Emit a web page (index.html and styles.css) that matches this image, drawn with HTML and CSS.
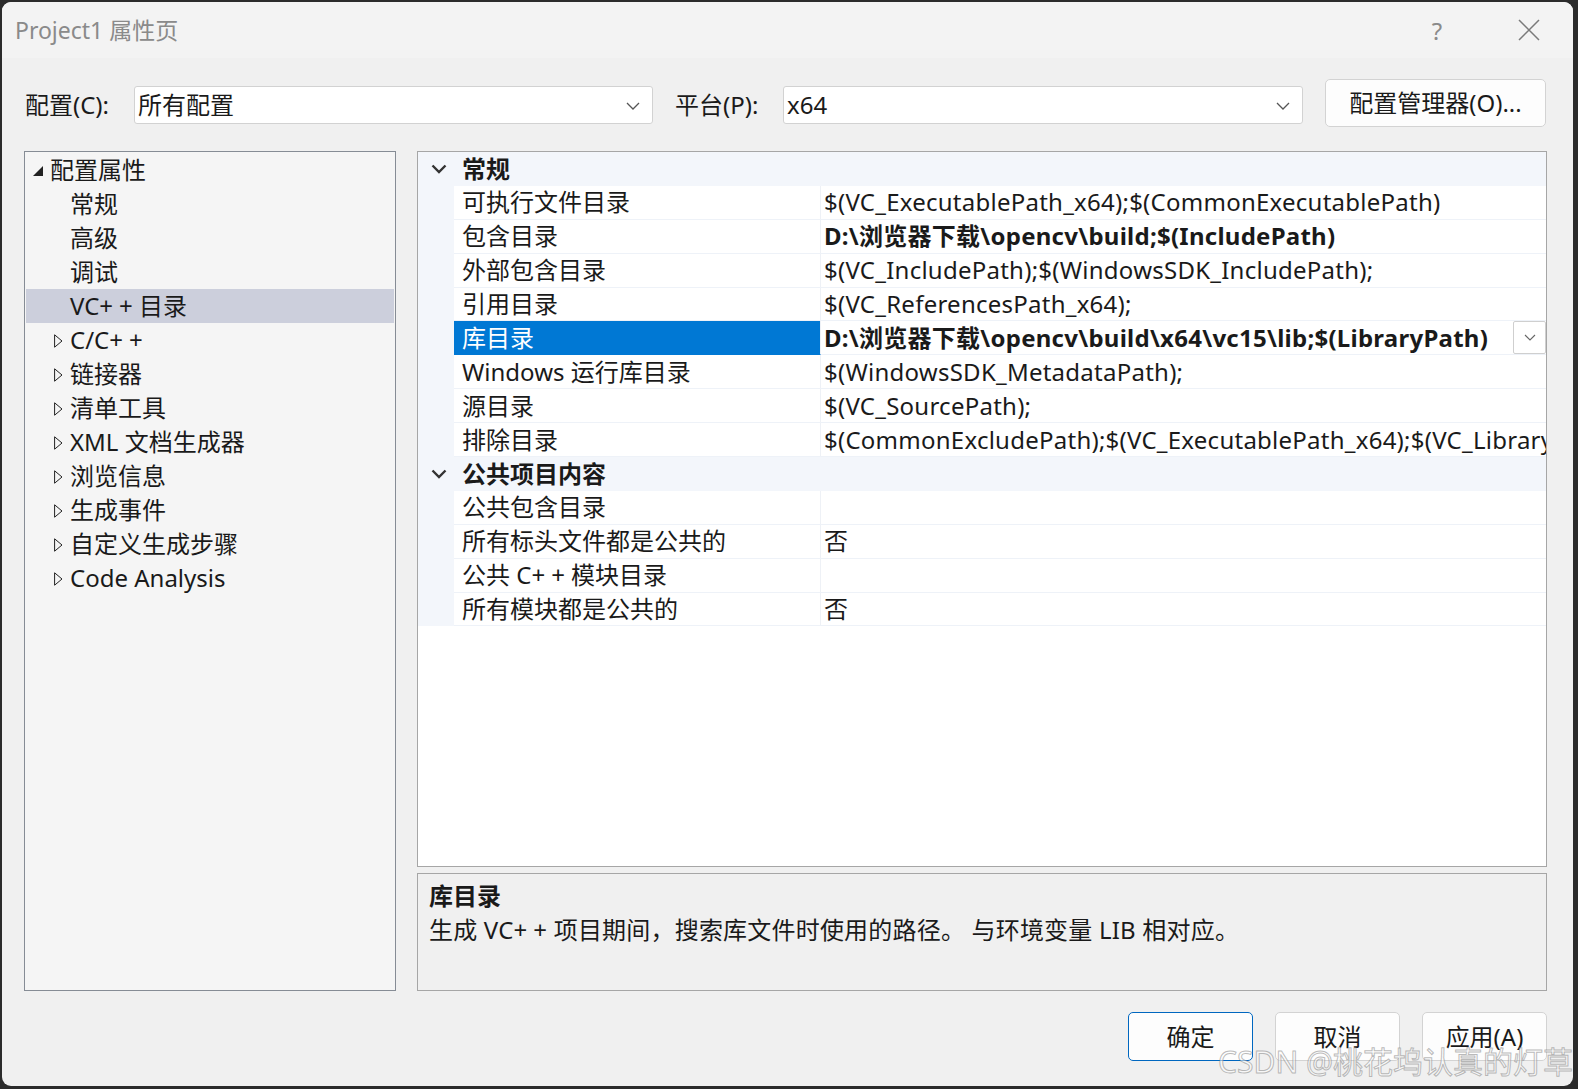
FILE: index.html
```html
<!DOCTYPE html>
<html lang="zh-CN">
<head>
<meta charset="utf-8">
<title>Project1 属性页</title>
<link rel="stylesheet" href="styles.css">
</head>
<body>
<div class="window">
  <div class="titlebar">
    <div class="title">Project1 属性页</div>
    <div class="title-actions">
      <span class="help">?</span>
      <span class="close"><svg width="22" height="22" viewBox="0 0 22 22"><path d="M1 1 L21 21 M21 1 L1 21" stroke="#7a7a7a" stroke-width="1.5" fill="none"/></svg></span>
    </div>
  </div>
  <div class="content">
    <div class="config-row">
      <span class="cfg-label">配置(C):</span>
      <div class="combo"><span>所有配置</span><svg class="combo-chev" width="14" height="8" viewBox="0 0 14 8"><path d="M1 1 L7 7 L13 1" stroke="#555" stroke-width="1.3" fill="none"/></svg></div>
      <span class="cfg-label cfg-label2">平台(P):</span>
      <div class="combo combo2"><span>x64</span><svg class="combo-chev" width="14" height="8" viewBox="0 0 14 8"><path d="M1 1 L7 7 L13 1" stroke="#555" stroke-width="1.3" fill="none"/></svg></div>
      <button class="btn cfg-btn">配置管理器(O)...</button>
    </div>

    <div class="main">
      <div class="tree">
        <div class="tree-item root"><svg class="tri-open" width="10" height="10" viewBox="0 0 10 10"><polygon points="10,0 10,10 0,10" fill="#222"/></svg><span>配置属性</span></div>
        <div class="tree-item child"><span>常规</span></div>
        <div class="tree-item child"><span>高级</span></div>
        <div class="tree-item child"><span>调试</span></div>
        <div class="tree-item child selected"><span>VC<span class="pp">+</span>+ 目录</span></div>
        <div class="tree-item closed"><svg class="tri-closed" width="9" height="14" viewBox="0 0 9 14"><polygon points="0.6,0.8 8,7 0.6,13.2" fill="none" stroke="#222" stroke-width="1"/></svg><span>C/C<span class="pp">+</span>+</span></div>
        <div class="tree-item closed"><svg class="tri-closed" width="9" height="14" viewBox="0 0 9 14"><polygon points="0.6,0.8 8,7 0.6,13.2" fill="none" stroke="#222" stroke-width="1"/></svg><span>链接器</span></div>
        <div class="tree-item closed"><svg class="tri-closed" width="9" height="14" viewBox="0 0 9 14"><polygon points="0.6,0.8 8,7 0.6,13.2" fill="none" stroke="#222" stroke-width="1"/></svg><span>清单工具</span></div>
        <div class="tree-item closed"><svg class="tri-closed" width="9" height="14" viewBox="0 0 9 14"><polygon points="0.6,0.8 8,7 0.6,13.2" fill="none" stroke="#222" stroke-width="1"/></svg><span>XML 文档生成器</span></div>
        <div class="tree-item closed"><svg class="tri-closed" width="9" height="14" viewBox="0 0 9 14"><polygon points="0.6,0.8 8,7 0.6,13.2" fill="none" stroke="#222" stroke-width="1"/></svg><span>浏览信息</span></div>
        <div class="tree-item closed"><svg class="tri-closed" width="9" height="14" viewBox="0 0 9 14"><polygon points="0.6,0.8 8,7 0.6,13.2" fill="none" stroke="#222" stroke-width="1"/></svg><span>生成事件</span></div>
        <div class="tree-item closed"><svg class="tri-closed" width="9" height="14" viewBox="0 0 9 14"><polygon points="0.6,0.8 8,7 0.6,13.2" fill="none" stroke="#222" stroke-width="1"/></svg><span>自定义生成步骤</span></div>
        <div class="tree-item closed"><svg class="tri-closed" width="9" height="14" viewBox="0 0 9 14"><polygon points="0.6,0.8 8,7 0.6,13.2" fill="none" stroke="#222" stroke-width="1"/></svg><span>Code Analysis</span></div>
      </div>

      <div class="right">
        <div class="grid">
          <div class="row cat">
            <div class="gutter"><svg width="16" height="10" viewBox="0 0 16 10"><path d="M1.5 1.5 L8 8 L14.5 1.5" stroke="#333" stroke-width="2.4" fill="none"/></svg></div>
            <div class="cat-name">常规</div>
          </div>
          <div class="row"><div class="gutter"></div><div class="name">可执行文件目录</div><div class="value"><span class="vtext">$(VC_ExecutablePath_x64);$(CommonExecutablePath)</span></div></div>
          <div class="row"><div class="gutter"></div><div class="name">包含目录</div><div class="value"><span class="vtext bold">D:\浏览器下载\opencv\build;$(IncludePath)</span></div></div>
          <div class="row"><div class="gutter"></div><div class="name">外部包含目录</div><div class="value"><span class="vtext">$(VC_IncludePath);$(WindowsSDK_IncludePath);</span></div></div>
          <div class="row"><div class="gutter"></div><div class="name">引用目录</div><div class="value"><span class="vtext">$(VC_ReferencesPath_x64);</span></div></div>
          <div class="row"><div class="gutter"></div><div class="name sel">库目录</div><div class="value"><span class="vtext bold">D:\浏览器下载\opencv\build\x64\vc15\lib;$(LibraryPath)</span><span class="drop"><svg width="12" height="7" viewBox="0 0 12 7"><path d="M1 1 L6 6 L11 1" stroke="#666" stroke-width="1.1" fill="none"/></svg></span></div></div>
          <div class="row"><div class="gutter"></div><div class="name">Windows 运行库目录</div><div class="value"><span class="vtext">$(WindowsSDK_MetadataPath);</span></div></div>
          <div class="row"><div class="gutter"></div><div class="name">源目录</div><div class="value"><span class="vtext">$(VC_SourcePath);</span></div></div>
          <div class="row"><div class="gutter"></div><div class="name">排除目录</div><div class="value"><span class="vtext">$(CommonExcludePath);$(VC_ExecutablePath_x64);$(VC_LibraryPath_x64)</span></div></div>
          <div class="row cat">
            <div class="gutter"><svg width="16" height="10" viewBox="0 0 16 10"><path d="M1.5 1.5 L8 8 L14.5 1.5" stroke="#333" stroke-width="2.4" fill="none"/></svg></div>
            <div class="cat-name">公共项目内容</div>
          </div>
          <div class="row"><div class="gutter"></div><div class="name">公共包含目录</div><div class="value"><span class="vtext"></span></div></div>
          <div class="row"><div class="gutter"></div><div class="name">所有标头文件都是公共的</div><div class="value"><span class="vtext">否</span></div></div>
          <div class="row"><div class="gutter"></div><div class="name">公共 C<span class="pp">+</span>+ 模块目录</div><div class="value"><span class="vtext"></span></div></div>
          <div class="row"><div class="gutter"></div><div class="name">所有模块都是公共的</div><div class="value"><span class="vtext">否</span></div></div>
        </div>
        <div class="desc">
          <div class="desc-title">库目录</div>
          <div class="desc-text">生成 VC<span class="pp">+</span>+ 项目期间，搜索库文件时使用的路径。 与环境变量 LIB 相对应。</div>
        </div>
      </div>
    </div>

    <div class="footer">
      <button class="btn fbtn primary">确定</button>
      <button class="btn fbtn">取消</button>
      <button class="btn fbtn">应用(A)</button>
    </div>
  </div>
  <div class="watermark">CSDN @桃花坞认真的灯草</div>
</div>
</body>
</html>
```

FILE: styles.css
```css
* { box-sizing: border-box; }
html, body { margin: 0; padding: 0; }
html { overflow: hidden; }
body {
  background: #2b2b2b;
  width: 1578px;
  height: 1089px;
  overflow: hidden;
  padding: 2px 0 0 2px;
  font-family: "Noto Sans", "Noto Sans CJK SC", sans-serif;
  font-size: 24px;
  color: #1a1a1a;
}
.window {
  position: relative;
  width: 1571px;
  height: 1084px;
  background: #f0f0f0;
  border-radius: 9px;
  overflow: hidden;
  display: flex;
  flex-direction: column;
}
.titlebar {
  height: 56px;
  flex: none;
  background: #f3f3f3;
  display: flex;
  align-items: center;
  justify-content: space-between;
  padding-left: 13px;
}
.title { color: #8a8a8a; font-size: 23px; line-height: 30px; }
.title-actions { display: flex; align-items: center; height: 100%; }
.help {
  width: 96px;
  text-align: center;
  color: #8a8a8a;
  font-size: 24px;
}
.close {
  width: 88px;
  height: 100%;
  display: flex;
  align-items: center;
  justify-content: center;
}
.content {
  flex: 1;
  min-width: 0;
  min-height: 0;
  display: flex;
  flex-direction: column;
  padding: 0 26px 0 22px;
}
.config-row {
  flex: none;
  margin-top: 21px;
  height: 48px;
  display: flex;
  align-items: center;
}
.config-row > * { flex: none; }
.cfg-label { width: 110px; line-height: 30px; padding-left: 1px; margin-top: 3px; }
.cfg-label2 { margin-left: 22px; width: 108px; padding-left: 0; }
.combo {
  width: 519px;
  height: 38px;
  margin-top: 3px;
  background: #fff;
  border: 1px solid #d2d2d2;
  border-radius: 3px;
  display: flex;
  align-items: center;
  justify-content: space-between;
  padding: 0 12px 0 3px;
  line-height: 30px;
}
.combo2 { width: 520px; }
.combo-chev { margin-top: 2px; }
.btn {
  font-family: inherit;
  font-size: 24px;
  color: #1a1a1a;
  background: #fdfdfd;
  border: 1px solid #d3d3d3;
  border-radius: 5px;
  padding: 0;
  line-height: 30px;
}
.cfg-btn { margin-left: 22px; width: 221px; height: 48px; }
.pp { letter-spacing: 6px; }

.main {
  flex: none;
  margin-top: 24px;
  height: 840px;
  display: flex;
  gap: 21px;
  min-width: 0;
}
.tree {
  width: 372px;
  flex: none;
  border: 1px solid #868c95;
  background: #f5f5f5;
  padding: 1px 1px;
}
.tree-item {
  height: 34px;
  display: flex;
  align-items: center;
  line-height: 30px;
  white-space: nowrap;
}
.tree-item.root { padding-left: 7px; }
.tree-item.root svg { margin-right: 7px; margin-top: 2px; }
.tree-item.child { padding-left: 44px; }
.tree-item.closed { padding-left: 28px; }
.tree-item.closed svg { margin-right: 7px; margin-top: 1px; }
.tree-item.selected { background: #cccfdc; }

.right {
  flex: 1;
  min-width: 0;
  display: flex;
  flex-direction: column;
  gap: 6px;
}
.grid {
  height: 716px;
  flex: none;
  border: 1px solid #a6a6a6;
  background: #fff;
  overflow: hidden;
}
.row {
  height: 33.9px;
  display: flex;
  line-height: 30px;
}
.gutter {
  width: 36px;
  flex: none;
  background: #f3f6fb;
  display: flex;
  align-items: center;
  justify-content: center;
  padding-left: 5px;
}
.row.cat { background: #f3f6fb; }
.cat-name {
  font-weight: 700;
  padding-left: 8px;
  display: flex;
  align-items: center;
}
.name {
  width: 367px;
  flex: none;
  padding-left: 8px;
  border-right: 1px solid #eef1f6;
  border-bottom: 1px solid #eef2f8;
  display: flex;
  align-items: center;
  white-space: nowrap;
}
.name.sel { background: #0078d4; color: #fff; border-bottom-color: #0078d4; }
.value {
  flex: 1;
  min-width: 0;
  display: flex;
  align-items: center;
  border-bottom: 1px solid #eef2f8;
  padding-left: 3px;
}
.vtext {
  flex: 1;
  min-width: 0;
  white-space: nowrap;
  overflow: hidden;
  letter-spacing: 0.25px;
}
.bold { font-weight: 700; }
.drop {
  width: 33px;
  height: 33px;
  flex: none;
  border: 1px solid #cfcfcf;
  border-radius: 2px;
  background: #fff;
  display: flex;
  align-items: center;
  justify-content: center;
}

.desc {
  flex: 1;
  min-height: 0;
  border: 1px solid #a6a6a6;
  background: #f0f0f0;
  padding: 5px 11px;
  overflow: hidden;
}
.desc-title, .desc-text { height: 34px; line-height: 34px; white-space: nowrap; }
.desc-title { font-weight: 700; }
.desc-text { letter-spacing: 0.2px; }

.footer {
  flex: none;
  margin-top: 21px;
  display: flex;
  justify-content: flex-end;
  gap: 22px;
}
.fbtn { width: 125px; height: 49px; }
.fbtn.primary { border-color: #0067c0; }

.watermark {
  position: absolute;
  right: 0;
  bottom: 6px;
  font-size: 30px;
  line-height: 36px;
  color: rgba(255, 255, 255, 0.55);
  -webkit-text-stroke: 1px rgba(120, 120, 120, 0.5);
  white-space: nowrap;
  pointer-events: none;
}
```
